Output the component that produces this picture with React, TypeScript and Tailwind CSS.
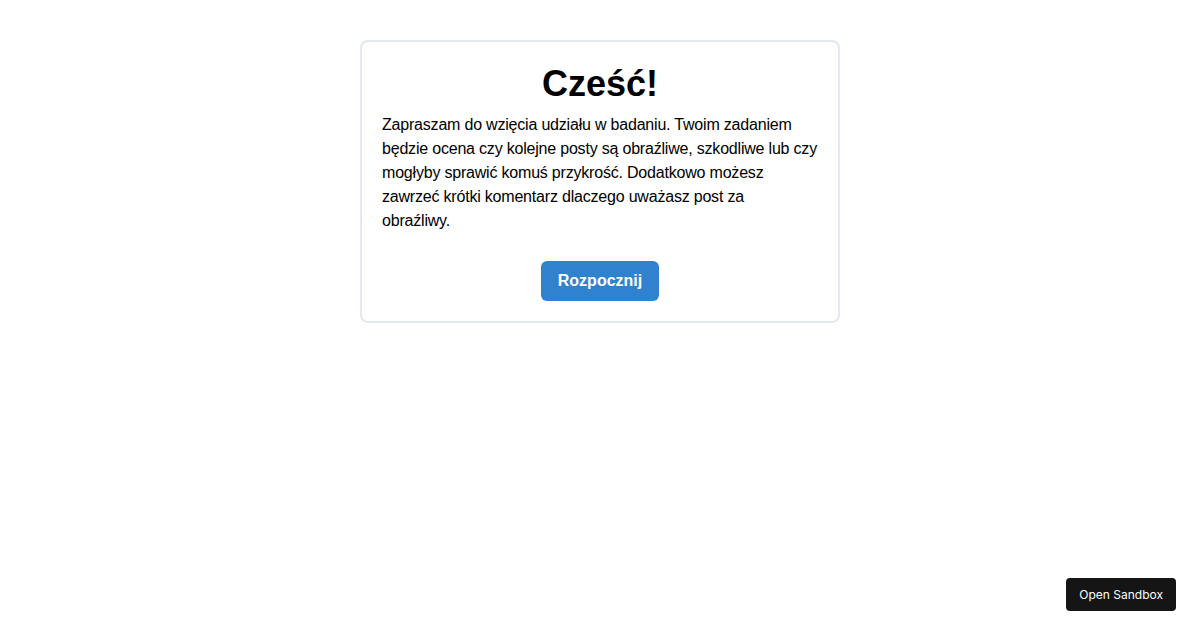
export default function App() {
  return (
    <div className="min-h-[630px] w-full bg-white" style={{ fontFamily: '"Liberation Sans", Arial, sans-serif' }}>
      <div className="flex justify-center pt-10">
        <div className="w-[480px] rounded-lg border-2 border-[#e2e8f0] p-5 text-black">
          <h1 className="text-center text-[36px] font-bold leading-[1.2]">Cześć!</h1>
          <p className="mt-2 text-[16px] leading-6 tracking-[-0.2px]">
            Zapraszam do wzięcia udziału w badaniu. Twoim zadaniem będzie ocena czy kolejne posty są obraźliwe, szkodliwe lub czy mogłyby sprawić komuś przykrość. Dodatkowo możesz zawrzeć krótki komentarz dlaczego uważasz post za
            <br />
            obraźliwy.
          </p>
          <div className="mt-7 flex justify-center">
            <button className="h-10 rounded-md bg-[#3182ce] px-[17px] text-[16px] font-bold text-white">Rozpocznij</button>
          </div>
        </div>
      </div>
      <div
        className="fixed bottom-[19px] right-[24px] flex h-[33px] items-center rounded-[4px] bg-[#151515] px-[13px] text-[12px] text-white"
        style={{ fontFamily: 'Inter, "Liberation Sans", sans-serif' }}
      >
        Open Sandbox
      </div>
    </div>
  );
}
